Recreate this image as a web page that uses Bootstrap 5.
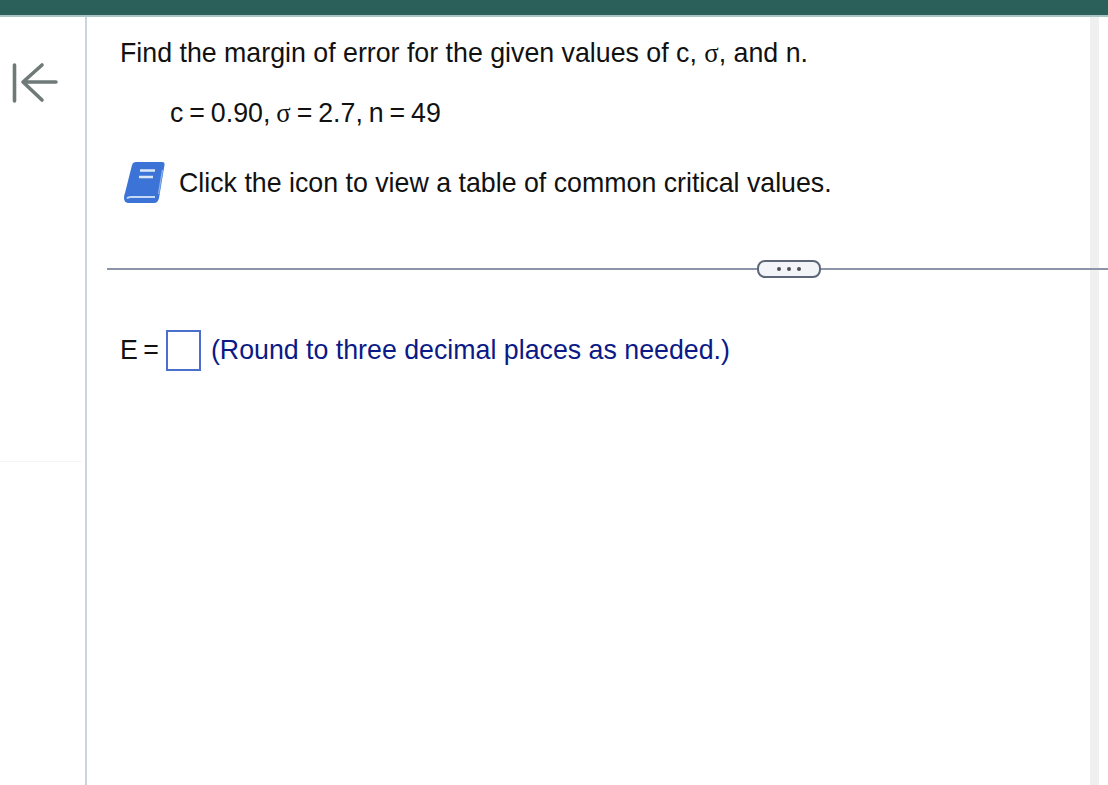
<!DOCTYPE html>
<html lang="en">

<head>
    <meta charset="UTF-8">
    <meta name="viewport" content="width=device-width, initial-scale=1">
    <title>Margin of error</title>
    <link href="https://cdn.jsdelivr.net/npm/bootstrap@5.3.3/dist/css/bootstrap.min.css" rel="stylesheet">
    <style>
        html, body { height: 100%; overflow: hidden; }
        body { font-family: "Liberation Sans", Arial, sans-serif; font-size: 26.75px; color: #111; background: #fff; }
        .top-strip { height: 17px; background: #2a5f5a; border-bottom: 2px solid #a9c4c4; }
        .page-wrap { height: 768px; }
        .side-rail { width: 87px; border-right: 2px solid #ccd3e3; padding: 44px 0 0 12px; }
        .side-rail svg { display: block; }
        .rail-rule { height: 1px; background: #f5f5f5; margin: 358px 3px 0 -12px; }
        .main-area { background: linear-gradient(#f0f0f0, #f0f0f0) no-repeat right 9px top / 9px 100%; padding-top: 18px; }
        .q-line { line-height: 36px; margin-left: 33px; }
        .q-vals { line-height: 36px; margin: 24px 0 0 83px; word-spacing: -1.5px; }
        .sig-mark { font-family: "Liberation Serif", serif; }
        .book-row { margin: 31px 0 0 37px; height: 42px; }
        .book-row span { margin-left: 14px; }
        .split-row { margin: 56px 0 0 20px; height: 18px; }
        .split-line { height: 2px; background: #8c95a8; }
        .more-tail { width: 287px; flex-grow: 0; }
        .more-pill { width: 64px; height: 18px; border: 2px solid #5c6678; border-radius: 8px; background: #f3f4f7; gap: 6px; }
        .more-pill i { width: 4px; height: 4px; border-radius: 50%; background: #4a4f58; display: block; }
        .answer-row { margin: 52px 0 0 33px; height: 40px; }
        .answer-eq { word-spacing: -2px; }
        .answer-box { width: 35px; height: 41px; border: 2px solid #4a6fcc; background: #fff; margin: 0 10px 0 7px; }
        .answer-hint { color: #0b1a86; }
    </style>
</head>

<body>
    <div class="top-strip"></div>

    <div class="page-wrap d-flex">
        <div class="side-rail flex-shrink-0">
            <svg width="48" height="42" viewBox="0 0 48 42">
                <path d="M2.500 4V40M11 21H44M30 4L11 21L30 39" fill="none" stroke="#6f7a78" stroke-width="3.600" stroke-linecap="round" stroke-linejoin="round"/>
            </svg>
            <div class="rail-rule"></div>
        </div>

        <div class="main-area flex-grow-1">
            <div class="q-line">Find the margin of error for the given values of c, <span class="sig-mark">σ</span>, and n.</div>
            <div class="q-vals">c = 0.90, <span class="sig-mark">σ</span> = 2.7, n = 49</div>

            <div class="book-row d-flex align-items-center">
                <svg width="41" height="42" viewBox="0 0 41 42">
                    <path d="M8 3Q9 0 12 0H38Q41 0 40.500 3L35 36Q34 41 30 41H5Q0 41 0 36Q0 33 1 31Z" fill="#3b74d6"/>
                    <path d="M3 36.500Q4 35 7 35H31" stroke="#c4d7f4" stroke-width="2" fill="none"/>
                    <path d="M16 8.500H31M15 15H29" stroke="#dbe7f9" stroke-width="2.600" fill="none"/>
                    <path d="M34.500 32L38.500 8" stroke="#8fb0ea" stroke-width="1.400" fill="none"/>
                </svg>
                <span>Click the icon to view a table of common critical values.</span>
            </div>

            <div class="split-row d-flex align-items-center">
                <div class="split-line flex-grow-1"></div>
                <div class="more-pill d-flex align-items-center justify-content-center flex-shrink-0"><i></i><i></i><i></i></div>
                <div class="split-line more-tail"></div>
            </div>

            <div class="answer-row d-flex align-items-center">
                <span class="answer-eq">E =</span>
                <div class="answer-box flex-shrink-0"></div>
                <span class="answer-hint">(Round to three decimal places as needed.)</span>
            </div>
        </div>
    </div>

    <script src="https://cdn.jsdelivr.net/npm/bootstrap@5.3.3/dist/js/bootstrap.bundle.min.js"></script>
</body>

</html>
